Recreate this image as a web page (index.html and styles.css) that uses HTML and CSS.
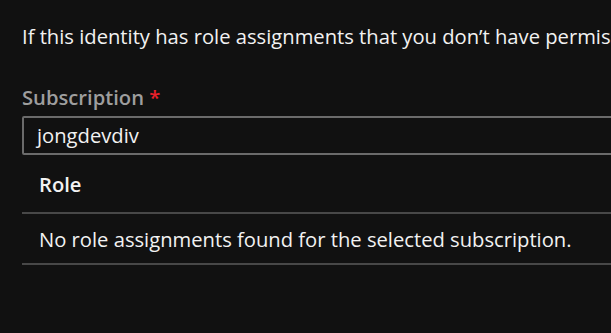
FILE: index.html
```html
<!DOCTYPE html>
<html>
<head>
  <title>Role assignments</title>
  <link rel="stylesheet" href="styles.css">
</head>
<body>
  <div class="panel">
    <p class="intro">If this identity has role assignments that you don’t have permission to read, they won't be shown in the list.</p>

    <div class="field">
      <label class="field-label">Subscription <span class="required">*</span></label>
      <div class="select-box">jongdevdiv</div>
    </div>

    <div class="grid">
      <div class="grid-head">Role</div>
      <div class="grid-row">No role assignments found for the selected subscription.</div>
    </div>
  </div>
</body>
</html>
```

FILE: styles.css
```css
html, body {
  margin: 0;
  padding: 0;
  background-color: #111111;
  overflow: hidden;
}

body {
  font-family: "Open Sans", "Noto Sans", sans-serif;
  color: #f2f2f2;
  font-size: 20.2px;
}

.panel {
  width: 900px;
  padding: 22px 0 0 22px;
}

.intro {
  margin: 0;
  line-height: 28px;
  white-space: nowrap;
}

.field {
  margin-top: 33px;
}

.field-label {
  display: block;
  color: #9e9e9e;
  font-weight: 600;
  line-height: 28px;
}

.required {
  color: #e8202a;
}

.select-box {
  margin-top: 5px;
  height: 35px;
  line-height: 35px;
  border: 2px solid #6b6b6b;
  border-radius: 2px;
  padding-left: 13px;
}

.grid-head {
  font-weight: 600;
  padding: 15px 0 14px 17px;
  line-height: 28px;
  border-bottom: 2px solid #484848;
}

.grid-row {
  padding: 14px 0 13px 17px;
  line-height: 22px;
  border-bottom: 2px solid #484848;
}
```
